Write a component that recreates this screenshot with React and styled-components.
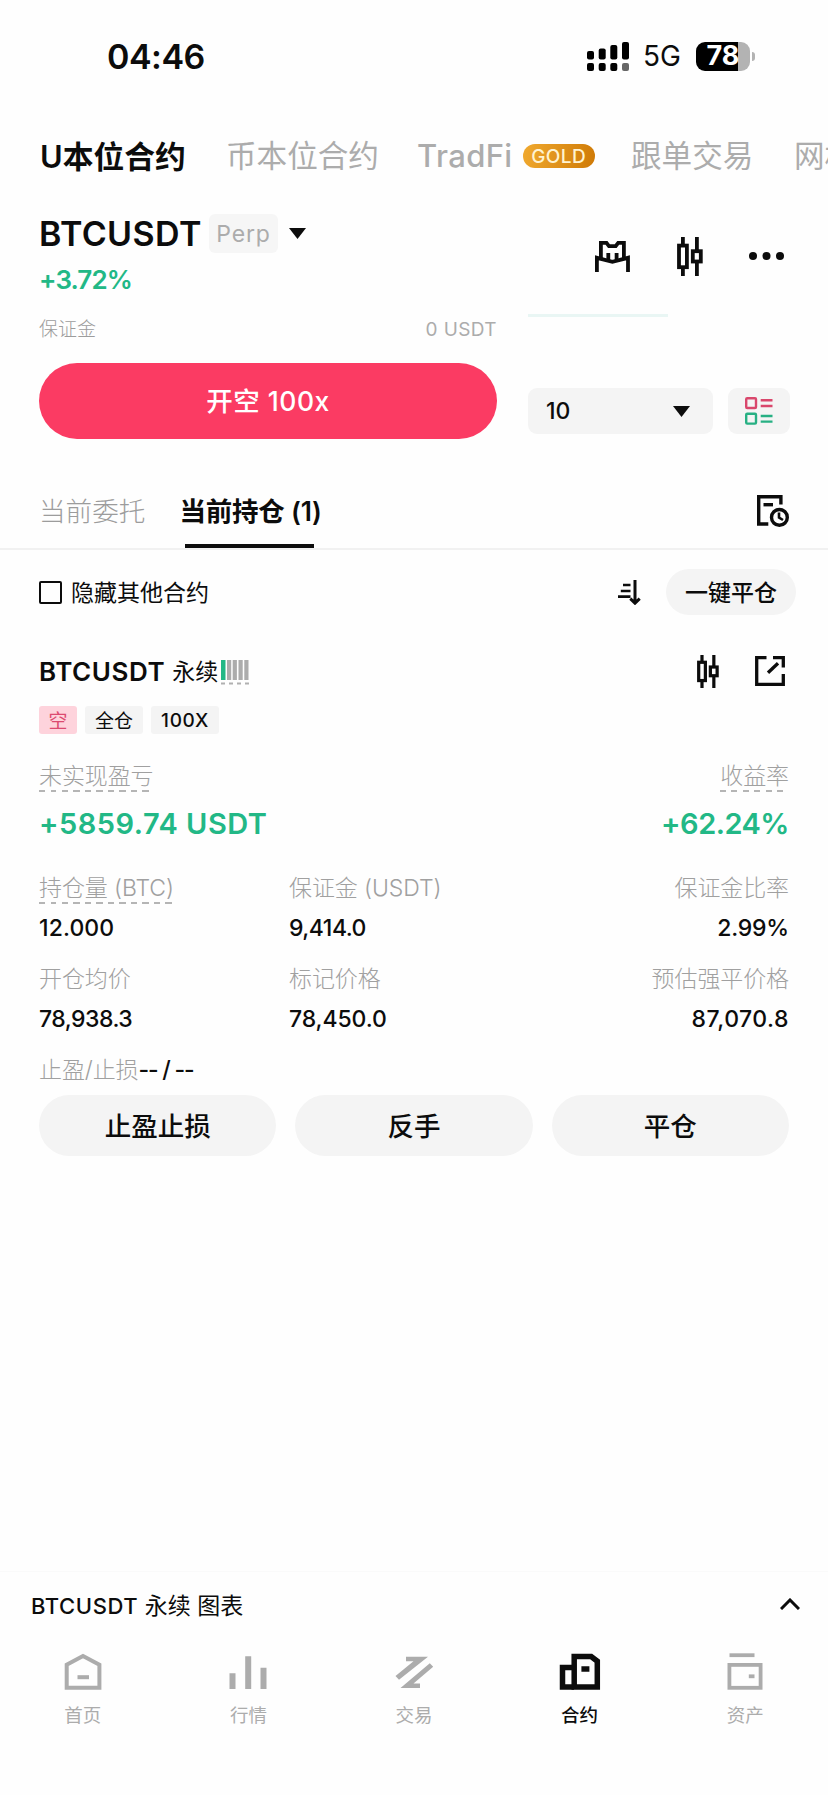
import React from "react"
import styled, { createGlobalStyle } from "styled-components"

const GlobalStyle = createGlobalStyle`
  * {
    box-sizing: border-box;
  }
  body {
    margin: 0;
    background: #fefefe;
    color: #0c0c0c;
    font-family: Inter, "Noto Sans CJK SC", sans-serif;
    -webkit-font-smoothing: antialiased;
  }
  button {
    font-family: inherit;
    color: inherit;
    border: none;
    padding: 0 0 3px;
  }
`

const green = "#22b886"
const red = "#fb3b63"
const gray = "#acacac"
const soft = "#f4f4f4"

const Screen = styled.div`
  width: 828px;
  height: 1795px;
  display: flex;
  flex-direction: column;
  overflow: hidden;
`

const Text = styled.span`
  padding-bottom: ${p => p.$lift || 0}px;
  font-size: ${p => p.$size}px;
  font-weight: ${p => p.$weight || 400};
  color: ${p => p.$color || "inherit"};
  letter-spacing: ${p => p.$track || 0}px;
  white-space: pre;
`

const StatusBar = styled.div`
  height: 112px;
  padding: 0 73px 0 107px;
  display: flex;
  align-items: center;
`

const Battery = styled.div`
  width: 54px;
  height: 29px;
  margin-left: 15px;
  border-radius: 9px;
  display: flex;
  align-items: center;
  justify-content: center;
  color: #fff;
  background: linear-gradient(90deg, #000 42px, #b3b3b3 42px);
`

const BatteryTip = styled.div`
  width: 3px;
  height: 9px;
  margin-left: 2px;
  border-radius: 0 4px 4px 0;
  background: #b3b3b3;
`

const Signal = styled.svg`
  margin-left: auto;
  margin-right: 14px;
`

const TopTabs = styled.nav`
  height: 88px;
  padding-left: 40px;
  display: flex;
  align-items: center;
  white-space: nowrap;
  overflow: hidden;
`

const TopTab = styled.div`
  flex: none;
  width: ${p => p.$width}px;
  display: flex;
  align-items: center;
`

const GoldBadge = styled.span`
  width: 72px;
  height: 24px;
  margin-left: 10px;
  border-radius: 12px;
  display: flex;
  align-items: center;
  justify-content: center;
  color: #fff3d0;
  background: linear-gradient(100deg, #f0a92f, #cf7a06);
`

const OrderPanel = styled.section`
  padding: 14px 38px 0 39px;
  display: grid;
  grid-template-columns: 458px 262px;
  column-gap: 31px;
`

const PairRow = styled.div`
  height: 39px;
  display: flex;
  align-items: center;
`

const PairName = styled.div`
  width: 239px;
  height: 39px;
  margin-right: 11px;
  display: flex;
  align-items: center;
`

const PerpTag = styled.span`
  width: 69px;
  height: 39px;
  margin-left: auto;
  border-radius: 6px;
  display: flex;
  align-items: center;
  justify-content: center;
  background: #f6f6f6;
`

const ChangeRow = styled.div`
  height: 54px;
  padding-bottom: 1px;
  display: flex;
  align-items: center;
`

const MarginRow = styled.div`
  height: 44px;
  display: flex;
  align-items: center;
  justify-content: space-between;
`

const ShortButton = styled.button`
  width: 100%;
  height: 76px;
  margin-top: 12px;
  border-radius: 38px;
  color: #fff;
  background: ${red};
`

const ToolRow = styled.div`
  height: 84px;
  padding: 0 6px 0 67px;
  display: flex;
  align-items: center;
  justify-content: space-between;
`

const DepthLine = styled.div`
  width: 140px;
  height: 3px;
  margin-top: 16px;
  background: #e9f6f4;
`

const SelectRow = styled.div`
  margin-top: 71px;
  display: flex;
  justify-content: space-between;
`

const Select = styled.div`
  width: 185px;
  height: 46px;
  padding: 0 23px 0 18px;
  border-radius: 9px;
  display: flex;
  align-items: center;
  justify-content: space-between;
  background: ${soft};
`

const BookButton = styled.div`
  width: 62px;
  height: 46px;
  border-radius: 9px;
  display: flex;
  align-items: center;
  justify-content: center;
  background: ${soft};
`

const ListTabs = styled.nav`
  height: 76px;
  margin-top: 35px;
  padding: 0 39px;
  display: flex;
  align-items: center;
  border-bottom: 2px solid #f1f1f1;
`

const ListTab = styled.div`
  position: relative;
  height: 74px;
  margin-right: 34px;
  display: flex;
  align-items: center;
`

const Underline = styled.span`
  position: absolute;
  left: 6px;
  bottom: 0;
  width: 129px;
  height: 4px;
  background: #0c0c0c;
`

const PushRight = styled.div`
  margin-left: auto;
  display: flex;
  align-items: center;
`

const FilterRow = styled.div`
  height: 46px;
  margin-top: 19px;
  padding: 0 32px 0 39px;
  display: flex;
  align-items: center;
`

const Checkbox = styled.span`
  width: 23px;
  height: 23px;
  margin-right: 9px;
  border: 2px solid #0c0c0c;
  border-radius: 2px;
`

const CloseAll = styled.button`
  width: 130px;
  height: 46px;
  margin-left: 25px;
  border-radius: 23px;
  background: ${soft};
`

const Position = styled.section`
  padding: 0 39px;
`

const PositionHead = styled.div`
  height: 46px;
  margin-top: 33px;
  display: flex;
  align-items: center;
`

const AdlMeter = styled.span`
  display: flex;
  margin: 4px 0 0 3px;
`

const PositionTools = styled(PushRight)`
  padding-right: 4px;
  gap: 36px;
`

const Tags = styled.div`
  margin-top: 12px;
  display: flex;
  gap: 8px;
`

const Tag = styled.span`
  width: ${p => p.$width}px;
  height: 28px;
  border-radius: 3px;
  display: flex;
  align-items: center;
  justify-content: center;
  color: ${p => (p.$short ? "#dc4a70" : "inherit")};
  background: ${p => (p.$short ? "#fed3dc" : soft)};
`

const Summary = styled.div`
  margin-top: 27px;
  display: flex;
  justify-content: space-between;
`

const Stat = styled.div`
  display: flex;
  flex-direction: column;
  align-items: ${p => (p.$end ? "flex-end" : "flex-start")};
`

const Label = styled.span`
  height: 31px;
  line-height: 30px;
  font-size: 23px;
  font-weight: 300;
  letter-spacing: -0.1px;
  color: #a0a0a0;
  white-space: pre;
  background: ${p =>
    p.$hint
      ? "repeating-linear-gradient(90deg, #b5b5b5 0 6px, transparent 6px 11.5px) 0 100% / 100% 2px no-repeat"
      : "none"};
`

const Pnl = styled.span`
  height: 40px;
  margin-top: 12px;
  line-height: 40px;
  font-size: 29px;
  font-weight: 600;
  letter-spacing: ${p => p.$track || 0}px;
  color: ${green};
`

const StatGrid = styled.div`
  margin-top: 29px;
  display: grid;
  grid-template-columns: 250px 250px 250px;
  row-gap: 20px;
`

const Value = styled.span`
  height: 32px;
  margin-top: 8px;
  line-height: 32px;
  font-size: 23px;
  font-weight: 500;
  letter-spacing: ${p => p.$track || 0}px;
`

const StopRow = styled.div`
  height: 30px;
  margin-top: 20px;
  display: flex;
  align-items: center;
`

const Actions = styled.div`
  margin-top: 10px;
  display: grid;
  grid-template-columns: repeat(3, 1fr);
  column-gap: 19px;
`

const Action = styled.button`
  height: 61px;
  border-radius: 31px;
  background: ${soft};
`

const ChartBar = styled.div`
  height: 68px;
  margin-top: auto;
  padding: 0 28px 4px 31px;
  display: flex;
  align-items: center;
  justify-content: space-between;
  border-top: 1px solid #fafafa;
`

const BottomNav = styled.nav`
  height: 156px;
  padding-top: 13px;
  display: grid;
  grid-template-columns: repeat(5, 1fr);
`

const NavItem = styled.div`
  display: flex;
  flex-direction: column;
  align-items: center;
  color: ${p => (p.$active ? "#0c0c0c" : gray)};
`

const NavLabel = styled.span`
  margin-top: 11px;
  line-height: 28px;
  font-size: 18.5px;
  font-weight: ${p => (p.$active ? 500 : 400)};
`

const Caret = () => (
  <svg width="17" height="11" viewBox="0 0 17 11">
    <path d="M0 0H17L8.5 11Z" fill="#0c0c0c" />
  </svg>
)

const SignalIcon = () => (
  <Signal width="42" height="29" viewBox="0 0 42 29">
    <rect x="0" y="9" width="7" height="8.5" rx="2" />
    <rect x="11.7" y="6.5" width="7" height="11" rx="2" />
    <rect x="23.3" y="3" width="7" height="14.5" rx="2" />
    <rect x="35" y="0" width="7" height="17.5" rx="2" />
    <rect x="0" y="21" width="7" height="8" rx="2" />
    <rect x="11.7" y="21" width="7" height="8" rx="2" />
    <rect x="23.3" y="21" width="7" height="8" rx="2" />
    <rect x="35" y="21" width="7" height="8" rx="2" fill="#666" />
  </Signal>
)

const ArmorIcon = () => (
  <svg width="35" height="31" viewBox="0 0 35 31" fill="none" stroke="#0c0c0c" strokeWidth="3.8">
    <path d="M5.9 17V1.9H11.5L14 5.2H20.7L23.2 1.900H28.900V17" />
    <path d="M1.900 31V16.800L17.400 20.800L33 16.800V31" />
    <path d="M13.300 12V20M21.600 12V20" />
  </svg>
)

const CandlesIcon = ({ width, height }) => (
  <svg width={width} height={height} viewBox="0 0 26 39" fill="none" stroke="#0c0c0c" strokeWidth="3.8">
    <path d="M5.900 0V8M5.900 31V39M19.900 0V14M19.900 25V39" />
    <rect x="2" y="8.600" width="7.900" height="21.600" />
    <rect x="15.800" y="14.200" width="8" height="10.300" />
  </svg>
)

const DotsIcon = () => (
  <svg width="35" height="8" viewBox="0 0 35 8" fill="#0c0c0c">
    <circle cx="4" cy="4" r="4" />
    <circle cx="17.5" cy="4" r="4" />
    <circle cx="31" cy="4" r="4" />
  </svg>
)

const BookIcon = () => (
  <svg width="28" height="28" viewBox="0 0 28 28" fill="none" strokeWidth="2.4">
    <g stroke="#d9476c">
      <rect x="1.2" y="1.2" width="9.8" height="9.8" rx="1" />
      <path d="M15.700 3.200H27.500M15.700 9H27.500" />
    </g>
    <g stroke="#27b083">
      <rect x="1.2" y="16.8" width="9.8" height="9.8" rx="1" />
      <path d="M15.700 19H27.500M15.700 24.600H27.500" />
    </g>
  </svg>
)

const HistoryIcon = () => (
  <svg width="32" height="32" viewBox="0 0 32 32" fill="none" stroke="#0c0c0c" strokeWidth="3.4">
    <path d="M11.300 29H1.700V1.700H23.900V9.500" />
    <path d="M6.500 9.700H16" />
    <circle cx="22.400" cy="22.400" r="7.900" />
    <path d="M22 17.500V22.500L26 25" strokeWidth="2.6" />
  </svg>
)

const SortIcon = () => (
  <svg width="23" height="25" viewBox="0 0 23 25" fill="none" stroke="#0c0c0c" strokeWidth="2.7">
    <path d="M5 5H12.500M2.800 11H12.500M0 16.700H12.500" />
    <path d="M17 0V23M12.300 18.700L17 23.200L21.700 18.700" strokeWidth="3" />
  </svg>
)

const ShareIcon = () => (
  <svg width="30" height="30" viewBox="0 0 30 30" fill="none" stroke="#0c0c0c" strokeWidth="3.3">
    <path d="M11.500 1.700H1.700V28.300H28.300V18" />
    <path d="M18 1.700H28.300V11.500" />
    <path d="M13 16.800L23 7.200" />
  </svg>
)

const AdlIcon = () => (
  <svg width="28" height="26" viewBox="0 0 28 26">
    <rect width="4.500" height="20" fill={green} />
    {[6, 11.7, 17.5, 23.3].map(x => (
      <rect key={x} x={x} width="4.2" height="20" fill="#acacac" />
    ))}
    <path d="M0 23.500H28" stroke="#b0b0b0" strokeWidth="1.800" strokeDasharray="4 4" />
  </svg>
)

const HomeIcon = () => (
  <svg width="42" height="38" viewBox="0 0 42 38" fill="none" stroke="currentColor" strokeWidth="4">
    <path d="M4.700 35.700V12.700L21 4L37.400 12.700V35.700Z" />
    <path d="M15.500 25.200H27" />
  </svg>
)

const MarketIcon = () => (
  <svg width="42" height="38" viewBox="0 0 42 38" fill="currentColor">
    <path d="M2.500 21.300H8.500V37H2.500ZM18.200 4.300H24.200V37H18.200ZM33.500 15.700H39.500V37H33.500Z" />
  </svg>
)

const TradeIcon = () => (
  <svg width="42" height="38" viewBox="0 0 42 38" fill="currentColor">
    <path d="M13 4.700H35L6 27.700L2.500 24L20.500 9.200H13Z" />
    <path d="M7.500 36L36.800 11.300L40.200 14.800L20.500 31.500H27V36Z" />
  </svg>
)

const FuturesIcon = () => (
  <svg width="42" height="38" viewBox="0 0 42 38" fill="none" stroke="currentColor" strokeWidth="5.500">
    <path d="M15.200 35V4.500H32.200L38.300 9.200V35Z" />
    <path d="M15 15.500H3.500V35H15" />
    <path d="M22.400 17H30.400" />
  </svg>
)

const AssetsIcon = () => (
  <svg width="42" height="38" viewBox="0 0 42 38" fill="none" stroke="currentColor" strokeWidth="3.800">
    <path d="M5.500 3.200H30.500" />
    <rect x="5.400" y="12.900" width="31.200" height="22.900" />
    <path d="M24.800 24.300H30.500" />
  </svg>
)

const ChevronUp = () => (
  <svg width="20" height="12" viewBox="0 0 20 12" fill="none" stroke="#0c0c0c" strokeWidth="3">
    <path d="M1 11L10 2L19 11" />
  </svg>
)

const stats = [
  { label: "持仓量 (BTC)", value: "12.000", track: 0.1, hint: true },
  { label: "保证金 (USDT)", value: "9,414.0", track: -0.5 },
  { label: "保证金比率", value: "2.99%", track: -0.2, end: true },
  { label: "开仓均价", value: "78,938.3", track: -0.5 },
  { label: "标记价格", value: "78,450.0", track: -0.1 },
  { label: "预估强平价格", value: "87,070.8", track: 0.5, end: true },
]

const navItems = [
  { label: "首页", Icon: HomeIcon },
  { label: "行情", Icon: MarketIcon },
  { label: "交易", Icon: TradeIcon },
  { label: "合约", Icon: FuturesIcon, active: true },
  { label: "资产", Icon: AssetsIcon },
]

const App = () => (
  <Screen>
    <GlobalStyle />
    <StatusBar>
      <Text $size={34} $weight={600} $track={-0.5}>04:46</Text>
      <SignalIcon />
      <Text $size={28}>5G</Text>
      <Battery>
        <Text $size={27} $weight={700} $lift={1}>78</Text>
      </Battery>
      <BatteryTip />
    </StatusBar>

    <TopTabs>
      <TopTab $width={186}>
        <Text $size={30.8} $weight={600} $lift={4}>U本位合约</Text>
      </TopTab>
      <TopTab $width={191}>
        <Text $size={30.6} $color={gray} $lift={4}>币本位合约</Text>
      </TopTab>
      <TopTab $width={214}>
        <Text $size={31} $weight={500} $color={gray} $track={0.4} $lift={1}>TradFi</Text>
        <GoldBadge>
          <Text $size={19} $weight={500} $track={0.4}>GOLD</Text>
        </GoldBadge>
      </TopTab>
      <TopTab $width={163}>
        <Text $size={30.6} $color={gray} $lift={4}>跟单交易</Text>
      </TopTab>
      <TopTab $width={100}>
        <Text $size={30.6} $color={gray} $lift={4}>网格</Text>
      </TopTab>
    </TopTabs>

    <OrderPanel>
      <div>
        <PairRow>
          <PairName>
            <Text $size={34} $weight={600} $track={0.4}>BTCUSDT</Text>
            <PerpTag>
              <Text $size={23} $color={gray} $track={0.8}>Perp</Text>
            </PerpTag>
          </PairName>
          <Caret />
        </PairRow>
        <ChangeRow>
          <Text $size={26} $weight={600} $color={green} $track={-0.9}>+3.72%</Text>
        </ChangeRow>
        <MarginRow>
          <Text $size={19} $weight={300} $color="#9c9c9c" $lift={3}>保证金</Text>
          <Text $size={19} $color={gray} $track={0.4}>0 USDT</Text>
        </MarginRow>
        <ShortButton>
          <Text $size={26.5} $weight={500} $track={0.5}>开空 100x</Text>
        </ShortButton>
      </div>
      <div>
        <ToolRow>
          <ArmorIcon />
          <CandlesIcon width={26} height={39} />
          <DotsIcon />
        </ToolRow>
        <DepthLine />
        <SelectRow>
          <Select>
            <Text $size={23} $weight={500}>10</Text>
            <Caret />
          </Select>
          <BookButton>
            <BookIcon />
          </BookButton>
        </SelectRow>
      </div>
    </OrderPanel>

    <ListTabs>
      <ListTab>
        <Text $size={26.6} $weight={300} $color="#9c9c9c" $lift={3}>当前委托</Text>
      </ListTab>
      <ListTab>
        <Text $size={26.5} $weight={600} $track={-0.2} $lift={3}>当前持仓 (1)</Text>
        <Underline />
      </ListTab>
      <PushRight>
        <HistoryIcon />
      </PushRight>
    </ListTabs>

    <FilterRow>
      <Checkbox />
      <Text $size={23} $lift={2}>隐藏其他合约</Text>
      <PushRight>
        <SortIcon />
        <CloseAll>
          <Text $size={23} $weight={500}>一键平仓</Text>
        </CloseAll>
      </PushRight>
    </FilterRow>

    <Position>
      <PositionHead>
        <Text $size={26} $weight={600} $track={0.55}>BTCUSDT </Text>
        <Text $size={23} $lift={2}>永续</Text>
        <AdlMeter>
          <AdlIcon />
        </AdlMeter>
        <PositionTools>
          <CandlesIcon width={22} height={33} />
          <ShareIcon />
        </PositionTools>
      </PositionHead>
      <Tags>
        <Tag $width={38} $short>
          <Text $size={19} $lift={2}>空</Text>
        </Tag>
        <Tag $width={58}>
          <Text $size={19} $lift={2}>全仓</Text>
        </Tag>
        <Tag $width={68}>
          <Text $size={19} $weight={500} $track={0.7}>100X</Text>
        </Tag>
      </Tags>

      <Summary>
        <Stat>
          <Label $hint>未实现盈亏</Label>
          <Pnl $track={0.5}>+5859.74 USDT</Pnl>
        </Stat>
        <Stat $end>
          <Label $hint>收益率</Label>
          <Pnl $track={-0.5}>+62.24%</Pnl>
        </Stat>
      </Summary>

      <StatGrid>
        {stats.map(({ label, value, track, hint, end }) => (
          <Stat key={label} $end={end}>
            <Label $hint={hint}>{label}</Label>
            <Value $track={track}>{value}</Value>
          </Stat>
        ))}
      </StatGrid>

      <StopRow>
        <Label>止盈/止损</Label>
        <Text $size={23} $weight={500} $track={-1.2}>-- / --</Text>
      </StopRow>

      <Actions>
        {["止盈止损", "反手", "平仓"].map(name => (
          <Action key={name}>
            <Text $size={26.5} $weight={500}>{name}</Text>
          </Action>
        ))}
      </Actions>
    </Position>

    <ChartBar>
      <span>
        <Text $size={22} $weight={500} $track={0.6}>BTCUSDT </Text>
        <Text $size={23}>永续 图表</Text>
      </span>
      <ChevronUp />
    </ChartBar>
    <BottomNav>
      {navItems.map(({ label, Icon, active }) => (
        <NavItem key={label} $active={active}>
          <Icon />
          <NavLabel $active={active}>{label}</NavLabel>
        </NavItem>
      ))}
    </BottomNav>
  </Screen>
)

export default App
